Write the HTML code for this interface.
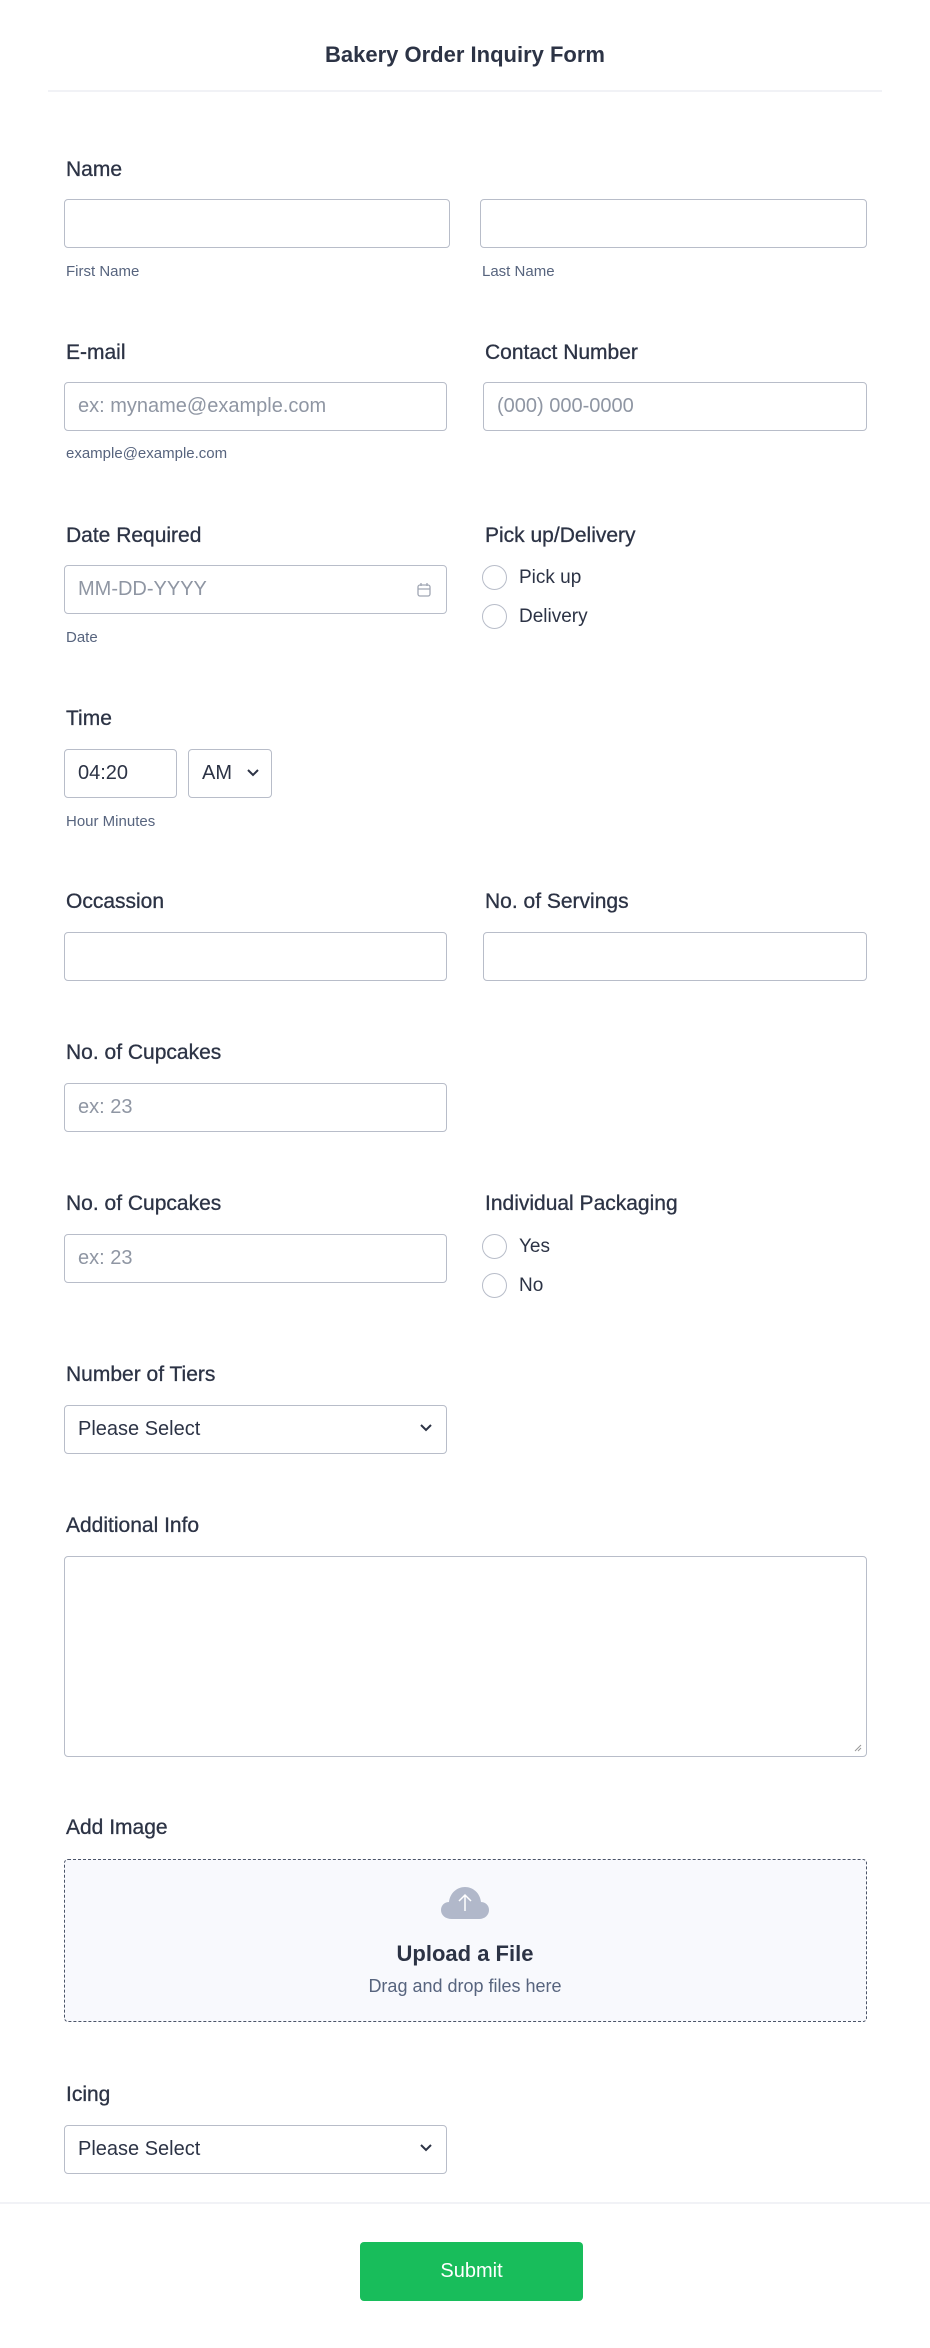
<!DOCTYPE html>
<html><head><meta charset="utf-8"><style>
*{box-sizing:border-box;margin:0;padding:0}
body{width:930px;height:2348px;background:#fff;font-family:"Liberation Sans",sans-serif;color:#2c3345;position:relative;overflow:hidden}
.a{position:absolute}
.t{position:absolute;left:0;width:930px;text-align:center;top:42px;font-size:22px;font-weight:bold;color:#2c3345}
.lab{position:absolute;font-size:21px;color:#2c3345;line-height:24px;-webkit-text-stroke:0.3px #2c3345}
.sub{position:absolute;font-size:15px;color:#57647e;line-height:16px}
.in{position:absolute;border:1px solid #b8bdc9;border-radius:4px;background:#fff;height:49px;font-size:20px;line-height:47px;padding-left:13px;color:#2c3345}
.ph{color:#8f96a3}
.rad{position:absolute;width:25px;height:25px;border:1px solid #b8bdc9;border-radius:50%}
.rl{position:absolute;font-size:19px;line-height:22px;color:#2c3345}
.chev{position:absolute;right:14px;top:18px}
</style></head><body>
<div class="t">Bakery Order Inquiry Form</div>
<div class="a" style="left:48px;top:90px;width:834px;height:2px;background:#f1f2f6"></div>

<div class="lab" style="left:66px;top:158px">Name</div>
<div class="in" style="left:64px;top:199px;width:386px"></div>
<div class="in" style="left:480px;top:199px;width:387px"></div>
<div class="sub" style="left:66px;top:264px">First Name</div>
<div class="sub" style="left:482px;top:264px">Last Name</div>

<div class="lab" style="left:66px;top:341px">E-mail</div>
<div class="lab" style="left:485px;top:341px">Contact Number</div>
<div class="in ph" style="left:64px;top:382px;width:383px">ex: myname@example.com</div>
<div class="in ph" style="left:483px;top:382px;width:384px">(000) 000-0000</div>
<div class="sub" style="left:66px;top:446px">example@example.com</div>

<div class="lab" style="left:66px;top:524px">Date Required</div>
<div class="in ph" style="left:64px;top:565px;width:383px">MM-DD-YYYY
<svg class="a" style="right:14px;top:16px" width="16" height="16" viewBox="0 0 16 16" fill="none" stroke="#a0a6b3" stroke-width="1.3"><rect x="2" y="3" width="12" height="11" rx="2"/><path d="M2 7h12M5 1v3M11 1v3"/></svg></div>
<div class="sub" style="left:66px;top:630px">Date</div>
<div class="lab" style="left:485px;top:524px">Pick up/Delivery</div>
<div class="rad" style="left:482px;top:565px"></div><div class="rl" style="left:519px;top:567px">Pick up</div>
<div class="rad" style="left:482px;top:604px"></div><div class="rl" style="left:519px;top:606px">Delivery</div>

<div class="lab" style="left:66px;top:707px">Time</div>
<div class="in" style="left:64px;top:749px;width:113px">04:20</div>
<div class="in" style="left:188px;top:749px;width:84px">AM<svg class="chev" style="top:19px;right:12px" width="12" height="8" viewBox="0 0 12 8" fill="none" stroke="#2c3345" stroke-width="2"><path d="M1 1l5 5 5-5"/></svg></div>
<div class="sub" style="left:66px;top:814px">Hour Minutes</div>

<div class="lab" style="left:66px;top:890px">Occassion</div>
<div class="lab" style="left:485px;top:890px">No. of Servings</div>
<div class="in" style="left:64px;top:932px;width:383px"></div>
<div class="in" style="left:483px;top:932px;width:384px"></div>

<div class="lab" style="left:66px;top:1041px">No. of Cupcakes</div>
<div class="in ph" style="left:64px;top:1083px;width:383px">ex: 23</div>

<div class="lab" style="left:66px;top:1192px">No. of Cupcakes</div>
<div class="in ph" style="left:64px;top:1234px;width:383px">ex: 23</div>
<div class="lab" style="left:485px;top:1192px">Individual Packaging</div>
<div class="rad" style="left:482px;top:1234px"></div><div class="rl" style="left:519px;top:1236px">Yes</div>
<div class="rad" style="left:482px;top:1273px"></div><div class="rl" style="left:519px;top:1275px">No</div>

<div class="lab" style="left:66px;top:1363px">Number of Tiers</div>
<div class="in" style="left:64px;top:1405px;width:383px">Please Select<svg class="chev" width="12" height="8" viewBox="0 0 12 8" fill="none" stroke="#2c3345" stroke-width="2"><path d="M1 1l5 5 5-5"/></svg></div>

<div class="lab" style="left:66px;top:1514px">Additional Info</div>
<div class="in" style="left:64px;top:1556px;width:803px;height:201px"><svg class="a" style="right:4px;bottom:4px" width="8" height="8" viewBox="0 0 8 8" stroke="#999" stroke-width="1"><path d="M7 1L1 7M7 4L4 7"/></svg></div>

<div class="lab" style="left:66px;top:1816px">Add Image</div>
<div class="a" style="left:64px;top:1859px;width:803px;height:163px;border:1.5px dashed #4b5468;border-radius:4px;background:#f8f9fd"></div>
<svg class="a" style="left:440px;top:1885px" width="50" height="36" viewBox="0 0 50 36"><path d="M12 34C5 34 1 30 1 25c0-5 4-8 8-8 1-9 8-15 16-15s15 6 16 15c4 0 8 3 8 8 0 5-4 9-10 9z" fill="#b1b8ca"/><path d="M25 26V10M19 16l6-6 6 6" stroke="#fff" stroke-width="1.5" fill="none"/></svg>
<div class="a" style="left:0;width:930px;text-align:center;top:1941px;font-size:22px;font-weight:bold;color:#2c3345">Upload a File</div>
<div class="a" style="left:0;width:930px;text-align:center;top:1976px;font-size:18px;color:#57647e">Drag and drop files here</div>

<div class="lab" style="left:66px;top:2083px">Icing</div>
<div class="in" style="left:64px;top:2125px;width:383px">Please Select<svg class="chev" width="12" height="8" viewBox="0 0 12 8" fill="none" stroke="#2c3345" stroke-width="2"><path d="M1 1l5 5 5-5"/></svg></div>

<div class="a" style="left:0;top:2202px;width:930px;height:2px;background:#f1f2f6"></div>
<div class="a" style="left:360px;top:2242px;width:223px;height:59px;background:#18bd5b;border-radius:4px;color:#fff;font-size:20px;text-align:center;line-height:59px">Submit</div>
</body></html>
